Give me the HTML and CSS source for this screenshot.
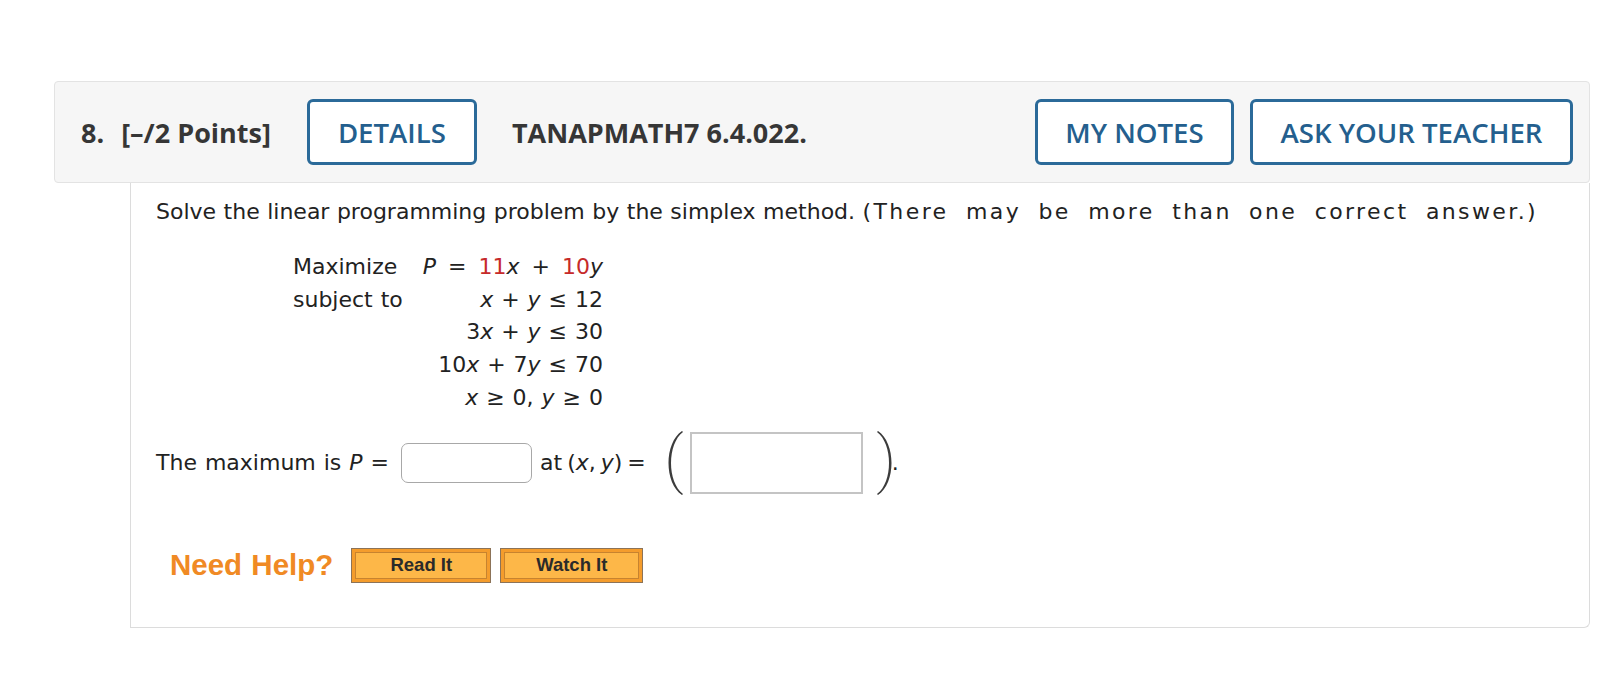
FILE: index.html
```html
<!DOCTYPE html>
<html lang="en">
<head>
<meta charset="utf-8">
<title>Question 8</title>
<link rel="stylesheet" href="styles.css">
</head>
<body>
<div class="question">
  <div class="qhead">
    <span class="qnum">8.</span>
    <span class="points">[–/2 Points]</span>
    <button class="hbtn details">DETAILS</button>
    <span class="code">TANAPMATH7 6.4.022.</span>
    <span class="spacer"></span>
    <button class="hbtn notes">MY NOTES</button>
    <button class="hbtn teacher">ASK YOUR TEACHER</button>
  </div>
  <div class="qbody">
    <p class="prompt">Solve the linear programming problem by the simplex method. <span class="note">(There may be more than one correct answer.)</span></p>
    <div class="lp">
      <span class="lbl">Maximize</span>
      <span class="eq"><i>P</i><span class="op">=</span><span class="red">11</span><i>x</i><span class="op">+</span><span class="red">10</span><i>y</i></span>
      <span class="lbl">subject to</span>
      <span class="eq"><i>x</i> + <i>y</i> ≤ 12</span>
      <span class="lbl"></span>
      <span class="eq">3<i>x</i> + <i>y</i> ≤ 30</span>
      <span class="lbl"></span>
      <span class="eq">10<i>x</i> + 7<i>y</i> ≤ 70</span>
      <span class="lbl"></span>
      <span class="eq"><i>x</i> ≥ 0, <i>y</i> ≥ 0</span>
    </div>
    <div class="answer">
      <span class="atext">The maximum is <i>P</i> =</span>
      <span class="box1"></span>
      <span class="atext tight">at (<i>x</i>, <i>y</i>) =</span>
      <svg class="paren lparen" width="18" height="64" viewBox="0 0 18 64"><path d="M15 0 C-3 12 -3 52 15 64 L16 63 C0 51 0 13 16 1 Z" fill="#3c3c3c"/></svg>
      <span class="box2"></span>
      <svg class="paren rparen" width="18" height="64" viewBox="0 0 18 64"><path d="M3 0 C21 12 21 52 3 64 L2 63 C18 51 18 13 2 1 Z" fill="#3c3c3c"/></svg>
      <span class="dot">.</span>
    </div>
    <div class="help">
      <span class="needhelp">Need Help?</span>
      <button class="obtn read">Read It</button>
      <button class="obtn watch">Watch It</button>
    </div>
  </div>
</div>
</body>
</html>
```
FILE: styles.css
```css
* { box-sizing: border-box; }
body {
  margin: 0;
  background: #ffffff;
  font-family: "DejaVu Sans", Verdana, sans-serif;
  color: #222;
}
.question {
  margin: 81px 30px 0 54px;
  width: 1536px;
}
.qhead {
  display: flex;
  align-items: center;
  height: 102px;
  padding: 0 16px 0 26px;
  background: #f6f6f6;
  border: 1px solid #e3e3e3;
  border-radius: 4px;
  font-family: "Open Sans", sans-serif;
  font-weight: 700;
  font-size: 27px;
  color: #363636;
}
.qnum { margin-right: 17px; }
.points { margin-right: 36px; }
.hbtn {
  font-family: "Open Sans", sans-serif;
  font-weight: 600;
  font-size: 27.6px;
  color: #245f8e;
  background: #ffffff;
  border: 3px solid #2b6a99;
  border-radius: 6px;
  height: 66px;
  padding: 0;
  cursor: pointer;
}
.details { width: 170px; margin-right: 35px; }
.spacer { flex: 1; }
.notes { width: 199px; margin-right: 16px; }
.teacher { width: 323px; }
.qbody {
  margin-left: 76px;
  height: 445px;
  border: 1px solid #dcdcdc;
  border-top: none;
  border-bottom-right-radius: 6px;
  padding: 15px 0 0 25px;
  font-size: 22px;
  word-spacing: 1px;
}
.prompt {
  margin: 0;
  line-height: 27px;
  word-spacing: 0.5px;
}
.note { letter-spacing: 2.4px; word-spacing: 8px; }
.lp {
  display: grid;
  grid-template-columns: auto auto;
  justify-content: start;
  column-gap: 20px;
  margin: 26px 0 0 137px;
  line-height: 32.7px;
}
.eq { text-align: right; }
.op { padding: 0 12px; }
.red { color: #c62a2a; }
.answer {
  display: flex;
  align-items: center;
  margin-top: 16px;
  height: 64px;
}
.box1 {
  width: 131px;
  height: 40px;
  border: 1.5px solid #a8a8a8;
  border-radius: 7px;
  margin: 0 8px 0 12px;
}
.tight { word-spacing: -2px; }
.lparen { margin-left: 21px; }
.box2 {
  width: 173px;
  height: 62px;
  border: 2px solid #c4c4c4;
  margin-left: 5px;
}
.rparen { margin-left: 12px; }
.dot { margin-left: -1px; }
.help {
  display: flex;
  align-items: center;
  margin: 53px 0 0 14px;
}
.needhelp {
  font-family: "Liberation Sans", Arial, sans-serif;
  font-weight: 700;
  font-size: 29.5px;
  color: #f08a24;
  margin-right: 18px;
}
.obtn {
  font-family: "Liberation Sans", Arial, sans-serif;
  font-weight: 700;
  font-size: 18.5px;
  color: #2a2a2a;
  height: 35px;
  padding: 0;
  background: #fdb748;
  border: 1px solid #8c7358;
  box-shadow: inset 0 0 0 3px #f49c2c, inset 0 0 0 4px #c7832f;
  cursor: pointer;
}
.read { width: 140px; margin-right: 9px; }
.watch { width: 143px; }
```
